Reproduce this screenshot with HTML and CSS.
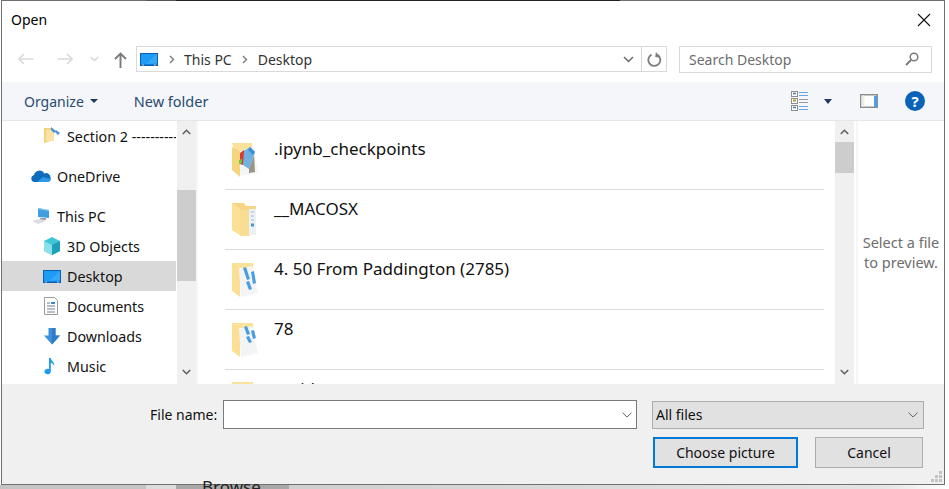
FILE: index.html
```html
<!DOCTYPE html>
<html lang="en">
<head>
<meta charset="utf-8">
<title>Open</title>
<link rel="stylesheet" href="styles.css">
</head>
<body>
<div class="stage">
  <div class="top-edge"></div>
  <div class="dialog">
    <header class="titlebar">
      <span class="title">Open</span>
      <svg class="close" width="14" height="14" viewBox="0 0 14 14"><path d="M1 1 13 13M13 1 1 13" stroke="#111" stroke-width="1.1" fill="none"/></svg>
    </header>

    <div class="navrow">
      <svg class="nav-back" width="16" height="12" viewBox="0 0 16 12"><path d="M15.500 6H1M6 1 1 6l5 5" stroke="#dadada" stroke-width="1.6" fill="none"/></svg>
      <svg class="nav-fwd" width="16" height="12" viewBox="0 0 16 12"><path d="M.5 6H15M10 1l5 5-5 5" stroke="#dadada" stroke-width="1.6" fill="none"/></svg>
      <svg class="nav-down" width="9" height="6" viewBox="0 0 9 6"><path d="M.7 1 4.500 4.600 8.300 1" stroke="#d5d5d5" stroke-width="1.4" fill="none"/></svg>
      <svg class="nav-up" width="13" height="16" viewBox="0 0 13 16"><path d="M6.500 16V1.500M1 7l5.500-5.500L12 7" stroke="#7a7a7a" stroke-width="1.9" fill="none"/></svg>
      <div class="address">
        <svg class="addr-icon" width="18" height="13" viewBox="0 0 18 13"><rect width="18" height="13" fill="#0a5fb0"/><rect x="1" y="1" width="16" height="10.500" fill="#1e9bf5"/><path d="M17 1v9L6 11z" fill="#4bb6fb" opacity=".5"/><path d="M2 12h2M14 12h2" stroke="#cfe8fb" stroke-width=".8"/></svg>
        <svg class="crumb-sep" width="6" height="9" viewBox="0 0 6 9"><path d="M1 1l3.500 3.500L1 8" stroke="#777" stroke-width="1.4" fill="none"/></svg>
        <span class="crumb">This PC</span>
        <svg class="crumb-sep" width="6" height="9" viewBox="0 0 6 9"><path d="M1 1l3.500 3.500L1 8" stroke="#777" stroke-width="1.4" fill="none"/></svg>
        <span class="crumb">Desktop</span>
        <span class="spacer"></span>
        <svg class="addr-chevron" width="11" height="7" viewBox="0 0 11 7"><path d="M1 1l4.500 4.500L10 1" stroke="#6a6a6a" stroke-width="1.5" fill="none"/></svg>
        <span class="addr-refresh">
          <svg width="15" height="15" viewBox="0 0 15 15"><path d="M4.500 2.600A6 6 0 1 0 10.500 2.800" stroke="#7d7d7d" stroke-width="1.800" fill="none"/><path d="M8.500 0v5.200h5z" fill="#7d7d7d" transform="rotate(8 10 3)"/></svg>
        </span>
      </div>
      <div class="search">
        <span class="search-text">Search Desktop</span>
        <svg width="14" height="14" viewBox="0 0 14 14"><circle cx="9" cy="5" r="3.800" stroke="#7a7a7a" stroke-width="1.500" fill="none"/><path d="M6 8 1 13" stroke="#7a7a7a" stroke-width="2"/></svg>
      </div>
    </div>

    <div class="toolbar">
      <span class="tool organize">Organize</span>
      <svg class="caret" width="8" height="4" viewBox="0 0 8 4"><path d="M0 0h8L4 4z" fill="#1f3a5f"/></svg>
      <span class="tool newfolder">New folder</span>
      <span class="spacer"></span>
      <svg class="view-icon" width="18" height="20" viewBox="0 0 18 20"><g fill="#fff" stroke="#8f8f8f"><rect x=".5" y=".5" width="6" height="5"/><rect x=".5" y="7.500" width="6" height="5"/><rect x=".5" y="14.500" width="6" height="5"/></g><path d="M2 2.500h3M2 16.500h3" stroke="#3b7fb8" stroke-width="1.500"/><path d="M2 9.500h3" stroke="#b09a3c" stroke-width="2"/><path d="M8 1.500h9M8 4.500h9M8 15.500h9M8 18.500h9" stroke="#6aa5ea" stroke-width="1"/><path d="M8 8.500h9M8 11.500h9" stroke="#9a9a9a" stroke-width="1"/></svg>
      <svg class="view-caret" width="8" height="5" viewBox="0 0 8 5"><path d="M0 0h8L4 5z" fill="#1f3a5f"/></svg>
      <svg class="pane-icon" width="18" height="14" viewBox="0 0 18 14"><rect x=".75" y=".75" width="16.500" height="12.500" fill="#fff" stroke="#8d8d8d" stroke-width="1.500"/><rect x="14" y="2" width="3" height="11" fill="#4a9ff0"/><rect x="1.500" y="1.500" width="3" height="11" fill="#ececec"/></svg>
      <span class="help">?</span>
    </div>

    <div class="panes">
      <nav class="tree">
        <div class="tree-row indent"><svg width="18" height="18" viewBox="0 0 18 18"><path d="M1 1h7v13l-7 2z" fill="#f3d27c"/><path d="M3 3h8v11H3z" fill="#f9e3a6"/><path d="M8 0l5 4-2 2-3-3zM13 3l4 3-2 2-3-3z" fill="#4d94d6"/></svg><span class="tree-label">Section 2 ----------------</span></div>
        <div class="tree-row root gap"><svg width="20" height="14" viewBox="0 0 20 14"><path d="M3.500 13A3.500 3.500 0 0 1 3 6.100 5.500 5.500 0 0 1 13.300 4.600 4.300 4.300 0 0 1 19.500 9 3.500 3.500 0 0 1 17 13z" fill="#0f6cbd"/><path d="M6 13l6-5 8 2a3.500 3.500 0 0 1-3 3z" fill="#2a9ae8"/></svg><span class="tree-label">OneDrive</span></div>
        <div class="tree-row root gap"><svg width="20" height="16" viewBox="0 0 20 16"><path d="M7 0l11 2v8L7 9z" fill="#3f9fe0"/><path d="M7 0l11 2v1L7 1z" fill="#9bd0ee"/><path d="M9 10h6v2H9z" fill="#9aa3ab"/><path d="M1 13l8-2 6 2-8 3z" fill="#d9dde0"/></svg><span class="tree-label">This PC</span></div>
        <div class="tree-row indent"><svg width="18" height="18" viewBox="0 0 18 18"><path d="M9 0l8 4v10l-8 4-8-4V4z" fill="#3ec6d8"/><path d="M9 8l8-4v10l-8 4z" fill="#1c9fb8"/><path d="M1 4l8 4v10l-8-4z" fill="#8be0ea"/></svg><span class="tree-label">3D Objects</span></div>
        <div class="tree-row indent selected"><svg width="18" height="13" viewBox="0 0 18 13"><rect width="18" height="13" fill="#0a5fb0"/><rect x="1" y="1" width="16" height="10.500" fill="#1e9bf5"/><path d="M17 1v9L6 11z" fill="#4bb6fb" opacity=".5"/><path d="M2 12h2M14 12h2" stroke="#cfe8fb" stroke-width=".8"/></svg><span class="tree-label">Desktop</span></div>
        <div class="tree-row indent"><svg width="16" height="18" viewBox="0 0 16 18"><path d="M1.500.5h10l3 3v14h-13z" fill="#fff" stroke="#9a9a9a"/><path d="M4 6h3M4 9h8M4 12h8M4 15h8" stroke="#6b7f94"/><path d="M8 6h4" stroke="#3b87d0" stroke-width="2"/></svg><span class="tree-label">Documents</span></div>
        <div class="tree-row indent"><svg width="18" height="17" viewBox="0 0 18 17"><path d="M5.500 0h7v7.500H17L9 16.500 1 7.500h4.500z" fill="#3d8fdb"/><path d="M9 0h3.500v7.500H17L9 16.500z" fill="#2e7cc6"/></svg><span class="tree-label">Downloads</span></div>
        <div class="tree-row indent"><svg width="14" height="18" viewBox="0 0 14 18"><path d="M6 1h1.800c.3 3 4 4 3.500 8-.8-2-2.500-3-3.500-3.200V14.500A3.200 2.800 0 1 1 6 12z" fill="#1d9bf0"/></svg><span class="tree-label">Music</span></div>
      </nav>
      <div class="scrollbar tree-scroll">
        <svg class="sb-up" width="9" height="6" viewBox="0 0 9 6"><path d="M.8 5 4.500 1.300 8.200 5" stroke="#606060" stroke-width="1.600" fill="none"/></svg>
        <span class="thumb"></span>
        <svg class="sb-down" width="9" height="6" viewBox="0 0 9 6"><path d="M.8 1 4.500 4.700 8.200 1" stroke="#606060" stroke-width="1.600" fill="none"/></svg>
      </div>

      <section class="files">
        <div class="file-row">
          <svg class="folder" width="28" height="36" viewBox="0 0 28 36"><path d="M1 1h20v26H9z" fill="#fbe29a"/><path d="M1 5l8 4v26l-8-7z" fill="#f6d57f"/><path d="M9 9l14-4 4 26-18 3z" fill="#f4f5f6"/><path d="M9 11l4-3 2 4-3 11-3-1z" fill="#d83a32"/><path d="M8 18l3-1v4l-3 1z" fill="#6cc644"/><path d="M13 9l6-4 5 5-6 17-6-4z" fill="#6db2e0"/><path d="M19 5l5 5-2 3-5-5z" fill="#3e8fd6"/><path d="M18 27l5-14 1 17-6 1z" fill="#9c9484"/></svg>
          <span class="file-name">.ipynb_checkpoints</span>
        </div>
        <div class="file-row">
          <svg class="folder" width="28" height="36" viewBox="0 0 28 36"><path d="M1 1h12l2 3h10v26H10z" fill="#f6d686"/><path d="M1 1l9 6v27l-9-6z" fill="#fbe096"/><path d="M9 8h10v26H9z" fill="#f9dd92"/><path d="M18 7h7v26h-7z" fill="#eef1f3"/><path d="M20 10h3M20 14h3M20 18h3" stroke="#c4d7e4" stroke-width="2"/><path d="M20 23h3" stroke="#4c95d3" stroke-width="3"/></svg>
          <span class="file-name">__MACOSX</span>
        </div>
        <div class="file-row">
          <svg class="folder" width="28" height="36" viewBox="0 0 28 36"><path d="M1 1h21v5H1z" fill="#fbe29a"/><path d="M1 1l8 6v28l-8-6z" fill="#fbdf94"/><path d="M8 7l13-3 6 27-17 4z" fill="#f2f4f5"/><path d="M12 6l3-1 4 12-3 1zM20 10l3-1 2 12-3 1zM15 20l3-1 3 8-3 1z" fill="#4a9de0"/></svg>
          <span class="file-name">4. 50 From Paddington (2785)</span>
        </div>
        <div class="file-row">
          <svg class="folder" width="28" height="36" viewBox="0 0 28 36"><path d="M1 1h21v5H1z" fill="#fbe29a"/><path d="M1 1l8 6v28l-8-6z" fill="#fbdf94"/><path d="M8 7l13-3 6 27-17 4z" fill="#f2f4f5"/><path d="M13 5l3-1 3 8-3 1zM20 9l3-1 2 8-3 1zM15 15l3-1 3 6-3 1z" fill="#4a9de0"/></svg>
          <span class="file-name">78</span>
        </div>
        <div class="file-row">
          <svg class="folder" width="28" height="36" viewBox="0 0 28 36"><path d="M1 0h21v6H1z" fill="#fbe29a"/></svg>
          <span class="file-name">entidy</span>
        </div>
      </section>
      <div class="scrollbar list-scroll">
        <svg class="sb-up" width="9" height="6" viewBox="0 0 9 6"><path d="M.8 5 4.500 1.300 8.200 5" stroke="#606060" stroke-width="1.600" fill="none"/></svg>
        <span class="thumb"></span>
        <svg class="sb-down" width="9" height="6" viewBox="0 0 9 6"><path d="M.8 1 4.500 4.700 8.200 1" stroke="#606060" stroke-width="1.600" fill="none"/></svg>
      </div>
      <aside class="preview">Select a file to preview.</aside>
    </div>

    <footer class="footer">
      <div class="foot-row">
        <label class="fn-label">File name:</label>
        <div class="fn-input"><svg width="10" height="6" viewBox="0 0 10 6"><path d="M.5.700 5 5 9.500.700" stroke="#666" fill="none"/></svg></div>
        <div class="filetype"><span>All files</span><svg width="10" height="6" viewBox="0 0 10 6"><path d="M.5.700 5 5 9.500.700" stroke="#666" fill="none"/></svg></div>
      </div>
      <div class="foot-row buttons">
        <button class="btn primary">Choose picture</button>
        <button class="btn cancel">Cancel</button>
      </div>
      <svg class="grip" width="11" height="11" viewBox="0 0 11 11"><path d="M8 0h3v3H8zM4 4h3v3H4zM8 4h3v3H8zM0 8h3v3H0zM4 8h3v3H4zM8 8h3v3H8z" fill="#c4c4c4"/></svg>
    </footer>
  </div>
  <div class="backdrop">
    <span class="bd bd-a"></span>
    <span class="bd bd-b"></span>
    <span class="bd bd-c"><span class="browse">Browse</span></span>
    <span class="bd bd-d"></span>
  </div>
</div>
</body>
</html>
```

FILE: styles.css
```css
* { box-sizing: border-box; }
html, body { margin: 0; padding: 0; }
body { background: #fff; overflow: hidden; font-family: "Noto Sans", "Open Sans", sans-serif; color: #000; }
.stage { width: 949px; height: 489px; position: relative; overflow: hidden; background: #fff; }
.top-edge { height: 1px; margin-left: 1px; width: 944px; background: linear-gradient(to right, #707070 0 145px, #555 145px 175px, #222 175px 619px, #707070 619px); }
.dialog { margin-left: 1px; width: 944px; height: 484px; border: 1px solid #707070; border-top: 0; background: #fff; display: flex; flex-direction: column; }
.spacer { flex: 1; }

.titlebar { height: 36px; flex: none; display: flex; align-items: center; justify-content: space-between; padding: 1px 13px 0 9px; }
.title { font-size: 14px; }

.navrow { height: 45px; flex: none; display: flex; align-items: center; padding-bottom: 1px; }
.nav-back { margin-left: 16px; }
.nav-fwd { margin-left: 23px; }
.nav-down { margin-left: 17px; }
.nav-up { margin-left: 15px; margin-top: 1px; }
.address { margin-left: 9px; width: 531px; height: 26px; border: 1px solid #d9d9d9; display: flex; align-items: center; padding-left: 3px; font-size: 14px; color: #333; }
.crumb-sep { margin: 0 9px 0 11px; }
.crumb-sep + .crumb + .crumb-sep { margin-left: 10px; margin-right: 10px; }
.addr-chevron { margin-right: 7px; }
.addr-refresh { width: 25px; height: 100%; border-left: 1px solid #d9d9d9; display: flex; align-items: center; justify-content: center; }
.search { margin-left: 12px; width: 253px; height: 27px; border: 1px solid #d9d9d9; display: flex; align-items: center; justify-content: space-between; padding: 0 12px 0 9px; font-size: 14px; color: #6d6d6d; }

.toolbar { height: 39px; flex: none; background: #f4f6f9; display: flex; align-items: center; font-size: 14px; color: #2a4a70; border-bottom: 1px solid #e6e6e6; }
.organize { margin-left: 22px; }
.caret { margin-left: 6px; }
.newfolder { margin-left: 36px; font-size: 14.5px; }
.view-caret { margin-left: 15px; }
.pane-icon { margin-left: 28px; }
.help { margin-left: 27px; margin-right: 19px; width: 20px; height: 20px; border-radius: 50%; background: #0a63b8; color: #fff; font-weight: 700; font-size: 15px; line-height: 20px; text-align: center; }

.panes { flex: 1; min-height: 0; display: grid; grid-template-columns: 174px 20px 639px 21px 1fr; overflow: hidden; }
.tree { overflow: hidden; font-size: 14.3px; color: #111; }
.tree-row { height: 30px; display: grid; align-items: center; justify-items: start; white-space: nowrap; overflow: hidden; }
.tree-row.gap { margin-top: 10px; }
.tree-row.indent { padding-left: 41px; grid-template-columns: 24px auto; }
.tree-row.root { padding-left: 29px; grid-template-columns: 26px auto; }
.tree-row.selected { background: #d9d9d9; }

.scrollbar { background: #f0f0f0; position: relative; width: 19px; }
.tree-scroll { margin-left: 1px; }
.thumb { position: absolute; left: 0; right: 0; background: #cdcdcd; }
.tree-scroll .thumb { top: 69px; height: 91px; }
.list-scroll .thumb { top: 21px; height: 31px; }
.sb-up { position: absolute; left: 5px; top: 8px; }
.sb-down { position: absolute; left: 5px; bottom: 9px; }

.files { overflow: hidden; padding: 9px 11px 0 27px; border-left: 2px solid #f6f6f6; }
.file-row { height: 60px; display: flex; align-items: flex-start; border-bottom: 1px solid #dcdcdc; overflow: hidden; }
.folder { flex: none; margin: 12px 15px 0 6px; }
.file-name { font-size: 17px; line-height: 22px; margin-top: 8px; color: #111; white-space: nowrap; }

.preview { font-size: 14.5px; line-height: 20px; color: #6d6d6d; border-left: 2px solid #f6f6f6; padding: 111px 0 0; text-align: center; }

.footer { height: 100px; flex: none; background: #f0f0f0; padding-top: 16px; position: relative; font-size: 14px; color: #111; }
.foot-row { display: flex; align-items: center; }
.fn-label { margin-left: 148px; width: 73px; }
.fn-input { width: 414px; height: 29px; background: #fff; border: 1px solid #7a7a7a; display: flex; align-items: center; justify-content: flex-end; padding-right: 4px; }
.filetype { margin-left: 15px; width: 272px; height: 28px; background: #e1e1e1; border: 1px solid #adadad; display: flex; align-items: center; justify-content: space-between; padding: 0 5px 0 3px; }
.buttons { margin-top: 8px; }
.btn { font: inherit; color: #111; background: #e1e1e1; padding: 0; }
.primary { margin-left: 651px; width: 145px; height: 31px; border: 2px solid #0078d7; }
.cancel { margin-left: 17px; width: 108px; height: 31px; border: 1px solid #adadad; }
.grip { position: absolute; right: 2px; bottom: 2px; }

.backdrop { display: flex; height: 4px; }
.bd { display: block; height: 4px; }
.bd-a { width: 146px; background: #c4c4c4; }
.bd-b { width: 30px; background: #dcdcdc; }
.bd-c { width: 113px; background: #a8a8a8; }
.bd-d { flex: 1; background: linear-gradient(to right, #cfcfcf, #e4e4e4 90%, #fff); }
.browse { position: absolute; left: 202px; top: 477px; font-size: 17px; line-height: 20px; color: #222; }
```
